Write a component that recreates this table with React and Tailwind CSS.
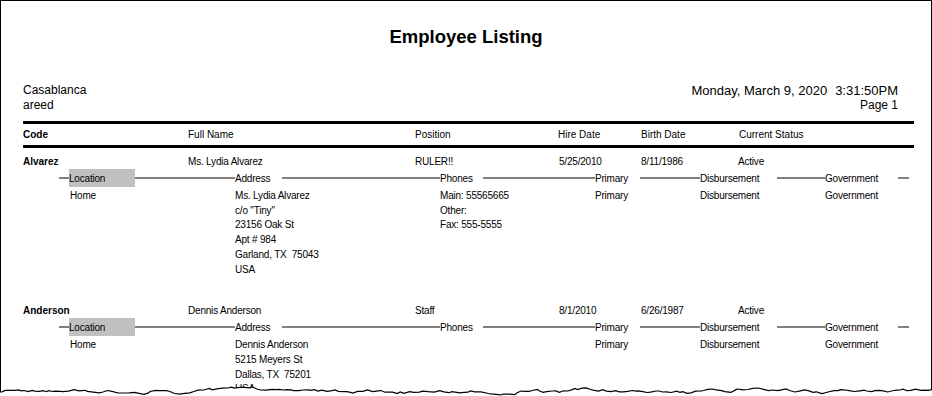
import React from 'react';

const rows = [
    {
        code: 'Alvarez',
        name: 'Ms. Lydia Alvarez',
        position: 'RULER!!',
        hire: '5/25/2010',
        birth: '8/11/1986',
        status: 'Active',
        address: ['Ms. Lydia Alvarez', 'c/o "Tiny"', '23156 Oak St', 'Apt # 984', 'Garland, TX  75043', 'USA'],
        phones: ['Main: 55565665', 'Other:', 'Fax: 555-5555'],
    },
    {
        code: 'Anderson',
        name: 'Dennis Anderson',
        position: 'Staff',
        hire: '8/1/2010',
        birth: '6/26/1987',
        status: 'Active',
        address: ['Dennis Anderson', '5215 Meyers St', 'Dallas, TX  75201', 'USA'],
        phones: [],
    },
];

// torn paper edge along the bottom
const tornEdge = () => {
    let seed = 11;
    const rand = () => (seed = (seed * 16807) % 2147483647) / 2147483647;
    let x = 0;
    let y = 392;
    const pts = [[0, y]];
    while (x < 932) {
        x += 2 + rand() * 4;
        y += (rand() - 0.5) * 3 + (391.5 - y) * 0.15;
        if (x > 185 && x < 240) y -= 0.6;
        if (x > 560 && x < 640) y -= 0.3;
        y = Math.max(385.5, Math.min(395, y));
        pts.push([Math.min(x, 932), y]);
    }
    const line = pts.map(([px, py], i) => `${i ? 'L' : 'M'}${px.toFixed(1)},${py.toFixed(1)}`).join(' ');
    return { line, fill: `${line} L932,396 L0,396 Z` };
};

const Seg = ({ w }) => <div className={`h-[2px] self-center bg-[#808080] ${w}`} />;

const Label = ({ w, gray, children }) => (
    <div className={`h-[18px] pt-[1px] leading-[18px] ${w} ${gray ? 'bg-[#c0c0c0]' : 'bg-white'}`}>{children}</div>
);

const Row = ({ r }) => (
    <div className="pb-[20px]">
        <div className="flex pt-[8px] leading-[12px]">
            <div className="w-[165px] font-bold tracking-normal">{r.code}</div>
            <div className="w-[227px]">{r.name}</div>
            <div className="w-[144px]">{r.position}</div>
            <div className="w-[82px]">{r.hire}</div>
            <div className="w-[97px]">{r.birth}</div>
            <div>{r.status}</div>
        </div>
        <div className="ml-[36px] mt-[1px] flex w-[850px]">
            <Seg w="w-[10px]" />
            <Label w="w-[66px]" gray>Location</Label>
            <Seg w="w-[100px]" />
            <Label w="w-[47px]">Address</Label>
            <Seg w="w-[158px]" />
            <Label w="w-[43px]">Phones</Label>
            <Seg w="w-[112px]" />
            <Label w="w-[45px]">Primary</Label>
            <Seg w="w-[60px]" />
            <Label w="w-[77px]">Disbursement</Label>
            <Seg w="w-[48px]" />
            <Label w="w-[73px]">Government</Label>
            <Seg w="w-[11px]" />
        </div>
        <div className="ml-[47px] mt-[2px] flex leading-[14.7px]">
            <div className="w-[165px]">Home</div>
            <div className="w-[205px] whitespace-pre">
                {r.address.map((l) => (
                    <div key={l}>{l}</div>
                ))}
            </div>
            <div className="w-[155px]">
                {r.phones.map((l) => (
                    <div key={l}>{l}</div>
                ))}
            </div>
            <div className="w-[105px]">Primary</div>
            <div className="w-[125px]">Disbursement</div>
            <div>Government</div>
        </div>
    </div>
);

const App = () => {
    const edge = tornEdge();
    return (
        <div className="relative w-[932px] h-[396px] overflow-hidden bg-white text-black font-['Liberation_Sans',Arial,sans-serif]">
            <div className="h-full border-l border-t border-r border-black">
                <h1 className="mt-[26px] text-center text-[18.5px] leading-[20px] font-bold">Employee Listing</h1>

                <div className="mt-[36px] flex justify-between pl-[22px] pr-[33px] text-[12px] leading-[15px]">
                    <div>
                        <div>Casablanca</div>
                        <div>areed</div>
                    </div>
                    <div className="text-right">
                        <div className="flex items-baseline justify-end gap-[8px] text-[13px]">
                            <span>Monday, March 9, 2020</span>
                            <span>3:31:50PM</span>
                        </div>
                        <div>Page 1</div>
                    </div>
                </div>

                <div className="ml-[22px] mr-[17px] mt-[8px]">
                    <div className="border-t-[3px] border-black" />
                    <div className="flex h-[21px] pt-[5px] text-[10px] leading-[12px]">
                        <div className="w-[165px] font-bold">Code</div>
                        <div className="w-[227px]">Full Name</div>
                        <div className="w-[143px]">Position</div>
                        <div className="w-[83px]">Hire Date</div>
                        <div className="w-[98px]">Birth Date</div>
                        <div>Current Status</div>
                    </div>
                    <div className="border-t-[3px] border-black" />

                    <div className="text-[10px] tracking-[-0.2px]">
                        {rows.map((r) => (
                            <Row key={r.code} r={r} />
                        ))}
                    </div>
                </div>
            </div>

            <svg className="absolute left-0 top-0" width="932" height="396" viewBox="0 0 932 396">
                <path d={edge.fill} fill="#fff" />
                <path d={edge.line} fill="none" stroke="#000" strokeWidth="1.2" />
            </svg>
        </div>
    );
};

export default App;
